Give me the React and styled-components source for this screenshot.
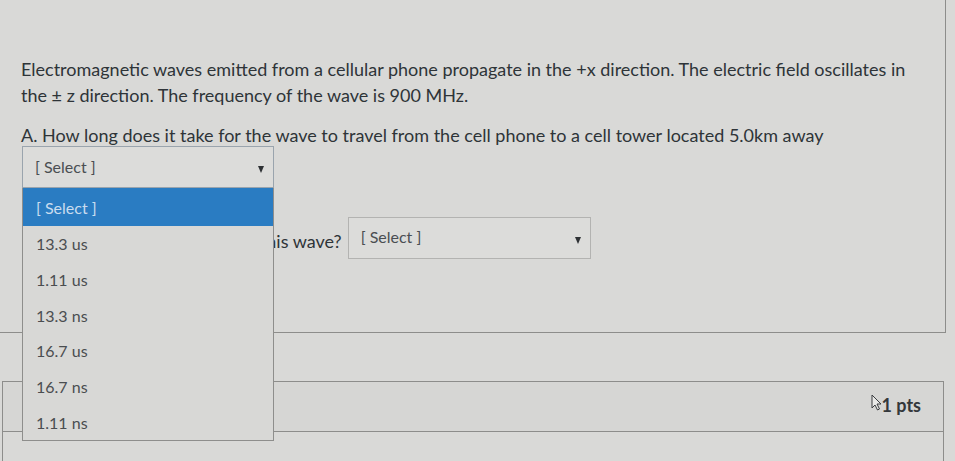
import React from "react";
import styled, { createGlobalStyle } from "styled-components";

const Global = createGlobalStyle`
  html, body { margin: 0; padding: 0; }
  body {
    background: #d9d9d7;
    font-family: Lato, "Open Sans", sans-serif;
    color: #2e3438;
    overflow: hidden;
  }
`;

const Page = styled.div`
  width: 955px;
  height: 461px;
  overflow: hidden;
`;

const QuestionCard = styled.div`
  margin: -1px 0 0 -1px;
  width: 947px;
  border: 1px solid #8d8d8b;
  box-sizing: border-box;
  padding: 56px 0 73px 21px;
`;

const Paragraph = styled.p`
  margin: 0;
  font-size: 18px;
  line-height: 26px;
  width: 895px;
`;

const Prompt = styled.p`
  margin: 16px 0 0;
  font-size: 18px;
  line-height: 22px;
`;

const SelectWrap = styled.div`
  position: relative;
  width: ${(p) => p.$w}px;
  margin-left: ${(p) => p.$ml || 0}px;
`;

const SelectBox = styled.div`
  box-sizing: border-box;
  height: ${(p) => p.$h}px;
  border: 1px solid ${(p) => (p.$open ? "#9aa4ad" : "#b3b3b1")};
  background: #dcdcda;
  display: flex;
  align-items: center;
  justify-content: space-between;
  padding: 0 9px 0 12px;
  font-size: 16px;
  color: #4a4e52;
`;

const SelectLabel = styled.span`
  margin-top: ${(p) => p.$mt || 0}px;
`;

const Arrow = styled.span`
  width: 0;
  height: 0;
  border-left: 3.5px solid transparent;
  border-right: 3.5px solid transparent;
  border-top: 7px solid #2e3134;
  margin-top: ${(p) => p.$mt || 0}px;
`;

const Menu = styled.ul`
  position: absolute;
  top: 100%;
  left: 0;
  right: 0;
  margin: 0;
  padding: 0;
  list-style: none;
  background: #d8d8d6;
  border: 1px solid #8e8e8c;
  border-top: none;
  z-index: 5;
`;

const Option = styled.li`
  height: 35.7px;
  display: flex;
  align-items: center;
  padding-left: 13px;
  font-size: 16px;
  color: ${(p) => (p.$active ? "#c9dcef" : "#4a4d50")};
  background: ${(p) => (p.$active ? "#2a7cc2" : "transparent")};
  ${(p) => p.$active && "height: 38px;"}
`;

const Row = styled.div`
  display: flex;
  align-items: center;
  margin: 29px 0 0 7px;
  font-size: 18px;
`;

const RowText = styled.span`
  margin-top: 6px;
`;

const Gap = styled.div`
  height: 48px;
`;

const PointsCard = styled.div`
  margin-left: 2px;
  width: 942px;
  border: 1px solid #8d8d8b;
  box-sizing: border-box;
`;

const PointsHeader = styled.div`
  height: 50px;
  border-bottom: 1px solid #8d8d8b;
  display: flex;
  align-items: center;
  justify-content: flex-end;
  padding: 0 22px 3px 0;
  box-sizing: border-box;
  background: #d6d6d4;
`;

const Points = styled.span`
  display: flex;
  align-items: center;
  font-size: 18px;
  font-weight: 700;
  color: #34383b;
`;

const PointsBody = styled.div`
  height: 60px;
`;

const Cursor = () => (
  <svg width="11" height="17" viewBox="0 0 11 17" style={{ marginRight: -1, marginTop: -6 }}>
    <path d="M1 1 L1 14 L4 11 L6.5 16 L8.5 15 L6 10 L10 10 Z" fill="#e9e9e7" stroke="#3a3d40" strokeWidth="1" strokeLinejoin="round" />
  </svg>
);

const options = ["[ Select ]", "13.3 us", "1.11 us", "13.3 ns", "16.7 us", "16.7 ns", "1.11 ns"];

export default function App() {
  return (
    <Page>
      <Global />
      <QuestionCard>
        <Paragraph>
          Electromagnetic waves emitted from a cellular phone propagate in the +x direction. The electric field oscillates in
          the ± z direction. The frequency of the wave is 900 MHz.
        </Paragraph>
        <Prompt>
          A. How long does it take for the wave to travel from the cell phone to a cell tower located 5.0km away
        </Prompt>
        <SelectWrap $w={252} $ml={1}>
          <SelectBox $h={42} $open>
            <SelectLabel $mt={-2}>[ Select ]</SelectLabel>
            <Arrow $mt={4} />
          </SelectBox>
          <Menu>
            {options.map((o, i) => (
              <Option key={i} $active={i === 0}>
                {o}
              </Option>
            ))}
          </Menu>
        </SelectWrap>
        <Row>
          <RowText>B. What is the wavelength of this wave?</RowText>
          <SelectWrap $w={243} $ml={6}>
            <SelectBox $h={42}>
              <SelectLabel $mt={-3}>[ Select ]</SelectLabel>
              <Arrow $mt={4} />
            </SelectBox>
          </SelectWrap>
        </Row>
      </QuestionCard>
      <Gap />
      <PointsCard>
        <PointsHeader>
          <Points>
            <Cursor />
            1 pts
          </Points>
        </PointsHeader>
        <PointsBody />
      </PointsCard>
    </Page>
  );
}
